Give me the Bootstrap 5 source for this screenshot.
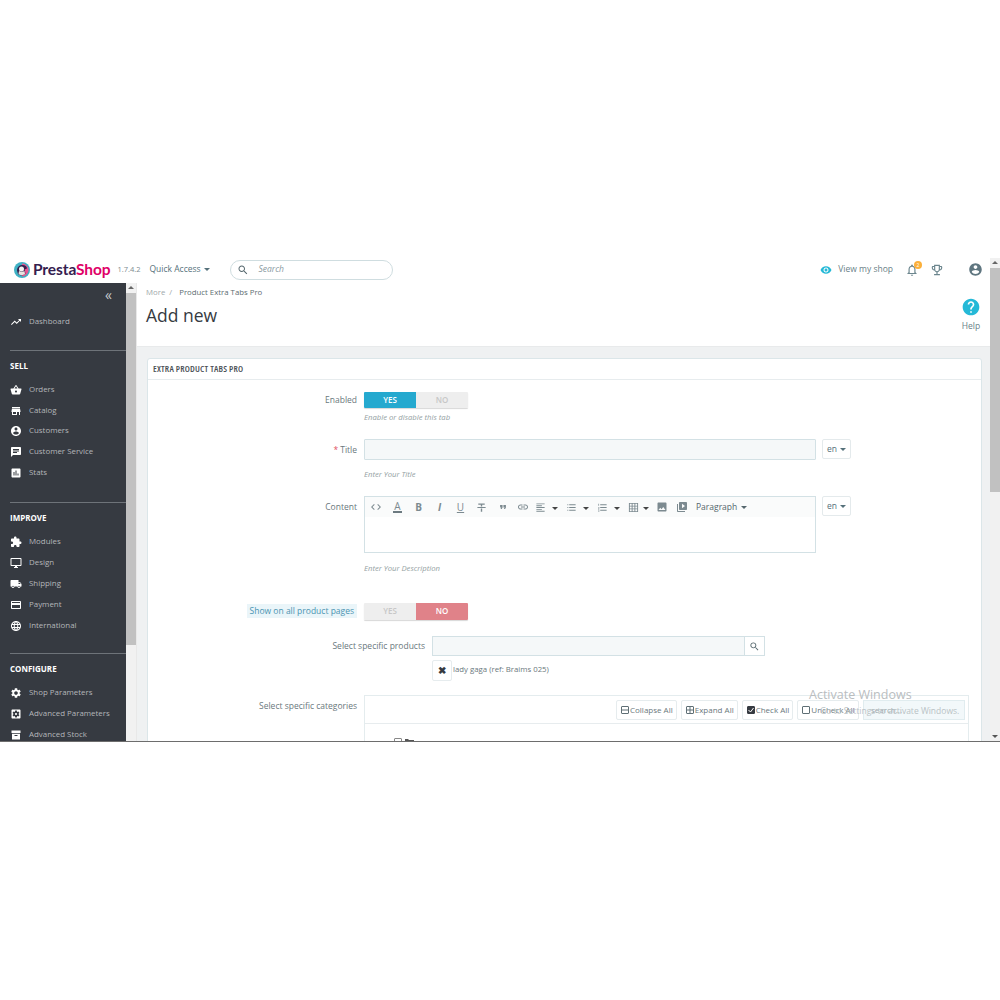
<!DOCTYPE html>
<html lang="en">
<head>
<meta charset="utf-8">
<title>Add new</title>
<link href="https://cdn.jsdelivr.net/npm/bootstrap@5.3.0/dist/css/bootstrap.min.css" rel="stylesheet">
<style>
html,body{height:1000px;overflow:hidden;background:#fff;font-family:"Open Sans",sans-serif;font-size:8.5px;color:#6c868e}
.ico{fill:currentColor;flex:none;display:block}
.screen{margin-top:258px;height:484px;border-bottom:1px solid #6d6d6d;overflow:hidden;position:relative}
.content-col{width:990px;min-width:0}
.scroll-r{width:10px;background:#f1f1f1;flex:none}
.arrow-u{width:0;height:0;border:3px solid transparent;border-top:0;border-bottom:3px solid #666;margin:3px auto 4px}
.arrow-d{width:0;height:0;border:3px solid transparent;border-bottom:0;border-top:3px solid #555;margin:auto auto 3px}
.thumb-r{height:224px;background:#c1c1c1}
.topbar{height:25px;background:#fff;padding-bottom:2px}
.logo-mark{width:16px;height:16px;margin-left:14px;flex:none}
.logo-word{font-family:Lato,sans-serif;font-weight:700;font-size:15.5px;line-height:1;margin-left:3px;letter-spacing:-.1px;color:#34204f}
.logo-word b{color:#df0067;font-weight:700}
.ver{font-size:7.5px;color:#7d8a8f;margin-left:7px;width:32px}
.quick{font-size:8.5px;color:#55707a;width:80px}
.caret-d{display:inline-block;width:0;height:0;border:3px solid transparent;border-bottom:0;border-top:3px solid currentColor;margin-left:3px;vertical-align:1px}
.searchbox{width:163px;height:20px;border:1px solid #cfdde0;border-radius:10px;color:#55676d;padding-left:6px}
.searchbox i{font-size:8.5px;color:#8a9a9f;margin-left:10px}
.view-link{font-size:8.5px;color:#6a7f87;margin-left:auto}
.eye{color:#25b9d7;margin-right:6px}
.bell-w{margin-left:12px;position:relative;color:#6c868e}
.bell-badge{position:absolute;top:-2px;right:-3px;width:8px;height:8px;border-radius:50%;background:#fbb03b;color:#fff;font-size:5px;line-height:8px;text-align:center}
.cup{color:#6c868e;margin-left:11px}
.userc{color:#5f7680;margin-left:24px;margin-right:7px}
.side{width:126px;background:#363a41;flex:none;height:459px;overflow:hidden;color:#bebebe}
.side-top{height:29px;padding:5px 14px 0 0;color:#c5c9cc;font-size:14px;line-height:13px;text-align:right}
.side-row{height:20.8px;padding-left:10px;gap:7px;color:#b4b6b9;font-size:7.9px;white-space:nowrap}
.side-row .ico{color:#fff}
.side-rule{height:1px;background:#6e7379;margin-left:10px}
.side-title{height:28.6px;padding:1px 0 0 10px;color:#fff;font-weight:700;font-size:8px;display:flex;align-items:center}
.scroll-l{width:11px;background:#f1f1f1;flex:none;border-right:1px solid #e8e8e8}
.thumb-l{height:352px;background:#c1c1c1}
.main-pane{background:#eff1f2;height:459px;min-width:0;overflow:hidden}
.page-head{height:64px;background:#fff;padding:4px 1px 0 9px;border-bottom:1px solid #e8eaeb}
.crumb{font-size:7.8px;line-height:11px;color:#5d6c71}
.crumb span{color:#a0a8ab;margin-right:7px}
.page-title{font-size:17.5px;line-height:24px;margin:5px 0 0;font-weight:400;color:#363a41}
.help-b{width:36px;padding-top:10px;font-size:8.5px;color:#6a7f87}
.help-b .ico{color:#25b9d7;margin:0 auto 3px}
.panelx{margin:11px 8px 0 10px;background:#fff;border:1px solid #dbe6e9;border-radius:3px;height:420px}
.panelx-head{height:21px;border-bottom:1px solid #e7ecee;padding-left:5px;font-family:"Open Sans",sans-serif;font-weight:600;font-size:9px;color:#4a4f55;line-height:20px;font-stretch:condensed;letter-spacing:.2px}
.frow{display:flex;align-items:flex-start}
.lab{width:216px;text-align:right;padding-right:7px;font-size:8.5px;line-height:16px;color:#6a787d;flex:none}
.lab em{color:#e0505f;font-style:normal;margin-right:2px}
.sw{width:104px;height:17px;font-size:8px;font-weight:600;flex:none;box-shadow:0 1px 1px #d8d8d8;border-radius:1px;overflow:hidden}
.sw span{width:52px;line-height:16px;text-align:center;color:#c7c7c7;background:#eee}
.sw .on-y{background:#25a9cf;color:#fff}
.sw .on-n{background:#e08289;color:#fff}
.hint{font-style:italic;font-size:7.7px;line-height:12px;color:#949fa3}
.finput{background:#f5f8f9;border:1px solid #d3e1e5;height:21px;border-radius:1px}
.langbtn{width:29px;height:20px;border:1px solid #e4eaec;border-radius:2px;margin-left:6px;font-size:8.5px;color:#55707a;text-align:center;line-height:18px;flex:none}
.editor{width:452px;height:57px;border:1px solid #d3e1e5;flex:none}
.ed-tools{height:20px;background:#fafbfb;padding-left:4px;color:#7c8a90;font-size:10px;line-height:1}
.ed-tools .tool{width:21px;flex:none;display:flex;justify-content:center;align-items:center}
.ed-tools .tw{width:14px;flex:none;display:flex;justify-content:center}
.ed-tools .ca{width:17px;flex:none;color:#444;padding-left:5px}
.ed-a{font-size:10px;border-bottom:2px solid #6c7a80;line-height:10px;padding:0 1px}
.show-lab{background:#eaf5f9;color:#4a94b2;padding:0 3px;display:inline-block;line-height:14px;font-size:8.5px}
.group-in{width:313px;height:20px;background:#f5f8f9;border:1px solid #d3e1e5;flex:none}
.group-btn{width:20px;height:20px;border:1px solid #d3e1e5;border-left:0;color:#55676d;flex:none}
.xbtn{width:20px;height:21px;border:1px solid #e6ecee;border-radius:2px;color:#363a41;font-size:10px;font-weight:700;line-height:19px;text-align:center;flex:none}
.tag-text{font-size:7.8px;color:#6a787d;margin-left:1px;line-height:18px}
.cat-box{width:605px;height:70px;border:1px solid #e4ecee;flex:none}
.cat-bar{height:28px;border-bottom:1px solid #e7ecee;padding-left:251px;padding-top:1px;gap:4px}
.cat-btn{height:20px;border:1px solid #e6ecee;border-radius:2px;font-size:8px;color:#6a787d;padding:0 3px 0 4px;gap:1px;white-space:nowrap;background:#fff;flex:none}
.box-i{width:8px;height:8px;border:1px solid #5f6f75;border-radius:1px;position:relative;flex:none}
.cat-tree{padding:14px 0 0 29px;gap:3px;color:#55676d}
.tree-c{width:8px;height:8px;border:1px solid #888;border-radius:1px;background:#fff}
.wm-title{position:absolute;left:809px;top:429px;font-size:12.5px;line-height:16px;color:#b9bdbf}
.wm-sub{position:absolute;left:820px;top:447px;font-size:8.5px;line-height:11px;color:#b9c2c5;white-space:nowrap}
.cat-search{position:absolute;left:863px;top:442px;width:102px;height:20px;background:rgba(240,247,249,.85);border:1px solid #e0ecef;color:#9aa6aa;font-size:8px;line-height:18px;padding-left:7px}
</style>
</head>
<body>
<svg width="0" height="0" class="d-none" aria-hidden="true">
<symbol id="i-trend" viewBox="0 0 24 24"><path d="M16 6l2.29 2.29-4.88 4.88-4-4L2 16.59 3.41 18l6-6 4 4 6.3-6.29L22 12V6z"/></symbol>
<symbol id="i-basket" viewBox="0 0 24 24"><path d="M17.21 9l-4.38-6.56c-.19-.28-.51-.42-.83-.42-.32 0-.64.14-.83.43L6.79 9H2c-.55 0-1 .45-1 1 0 .09.01.18.04.27l2.54 9.27c.23.84 1 1.46 1.92 1.46h13c.92 0 1.69-.62 1.93-1.46l2.54-9.27L23 10c0-.55-.45-1-1-1h-4.79zM9 9l3-4.4L15 9H9zm3 8c-1.1 0-2-.9-2-2s.9-2 2-2 2 .9 2 2-.9 2-2 2z"/></symbol>
<symbol id="i-store" viewBox="0 0 24 24"><path d="M20 4H4v2h16V4zm1 10v-2l-1-5H4l-1 5v2h1v6h10v-6h4v6h2v-6h1zm-9 4H6v-4h6v4z"/></symbol>
<symbol id="i-user" viewBox="0 0 24 24"><path d="M12 2C6.48 2 2 6.48 2 12s4.48 10 10 10 10-4.48 10-10S17.52 2 12 2zm0 3c1.66 0 3 1.34 3 3s-1.34 3-3 3-3-1.34-3-3 1.34-3 3-3zm0 14.2c-2.5 0-4.71-1.28-6-3.22.03-1.99 4-3.08 6-3.08 1.99 0 5.97 1.09 6 3.08-1.29 1.94-3.5 3.22-6 3.22z"/></symbol>
<symbol id="i-chat" viewBox="0 0 24 24"><path d="M20 2H4c-1.1 0-1.99.9-1.99 2L2 22l4-4h14c1.1 0 2-.9 2-2V4c0-1.1-.9-2-2-2zM6 9h12v2H6V9zm8 5H6v-2h8v2zm4-6H6V6h12v2z"/></symbol>
<symbol id="i-stats" viewBox="0 0 24 24"><path d="M19 3H5c-1.1 0-2 .9-2 2v14c0 1.1.9 2 2 2h14c1.1 0 2-.9 2-2V5c0-1.1-.9-2-2-2zM9 17H7v-7h2v7zm4 0h-2V7h2v10zm4 0h-2v-4h2v4z"/></symbol>
<symbol id="i-ext" viewBox="0 0 24 24"><path d="M20.5 11H19V7c0-1.1-.9-2-2-2h-4V3.5C13 2.12 11.88 1 10.5 1S8 2.12 8 3.5V5H4c-1.1 0-1.99.9-1.99 2v3.8H3.5c1.49 0 2.7 1.21 2.7 2.7s-1.21 2.7-2.7 2.7H2V20c0 1.1.9 2 2 2h3.8v-1.5c0-1.49 1.21-2.7 2.7-2.7 1.49 0 2.7 1.21 2.7 2.7V22H17c1.1 0 2-.9 2-2v-4h1.5c1.38 0 2.5-1.12 2.5-2.5S21.88 11 20.5 11z"/></symbol>
<symbol id="i-desk" viewBox="0 0 24 24"><path d="M21 2H3c-1.1 0-2 .9-2 2v12c0 1.1.9 2 2 2h7v2H8v2h8v-2h-2v-2h7c1.1 0 2-.9 2-2V4c0-1.1-.9-2-2-2zm0 14H3V4h18v12z"/></symbol>
<symbol id="i-ship" viewBox="0 0 24 24"><path d="M20 8h-3V4H3c-1.1 0-2 .9-2 2v11h2c0 1.66 1.34 3 3 3s3-1.34 3-3h6c0 1.66 1.34 3 3 3s3-1.34 3-3h2v-5l-3-4zM6 18.5c-.83 0-1.5-.67-1.5-1.5s.67-1.5 1.5-1.5 1.5.67 1.5 1.5-.67 1.5-1.5 1.5zm13.5-9l1.96 2.5H17V9.5h2.5zm-1.5 9c-.83 0-1.5-.67-1.5-1.5s.67-1.5 1.5-1.5 1.5.67 1.5 1.5-.67 1.5-1.5 1.5z"/></symbol>
<symbol id="i-pay" viewBox="0 0 24 24"><path d="M20 4H4c-1.11 0-1.99.89-1.99 2L2 18c0 1.11.89 2 2 2h16c1.11 0 2-.89 2-2V6c0-1.11-.89-2-2-2zm0 14H4v-6h16v6zm0-10H4V6h16v2z"/></symbol>
<symbol id="i-lang" viewBox="0 0 24 24"><path d="M11.99 2C6.47 2 2 6.48 2 12s4.47 10 9.99 10C17.52 22 22 17.52 22 12S17.52 2 11.99 2zm6.93 6h-2.95c-.32-1.25-.78-2.45-1.38-3.56 1.84.63 3.37 1.91 4.33 3.56zM12 4.04c.83 1.2 1.48 2.53 1.91 3.96h-3.82c.43-1.43 1.08-2.76 1.91-3.96zM4.26 14C4.1 13.36 4 12.69 4 12s.1-1.36.26-2h3.38c-.08.66-.14 1.32-.14 2 0 .68.06 1.34.14 2H4.26zm.82 2h2.95c.32 1.25.78 2.45 1.38 3.56-1.84-.63-3.37-1.9-4.33-3.56zm2.95-8H5.08c.96-1.66 2.49-2.93 4.33-3.56C8.81 5.55 8.35 6.75 8.03 8zM12 19.96c-.83-1.2-1.48-2.53-1.91-3.96h3.82c-.43 1.43-1.08 2.76-1.91 3.96zM14.34 14H9.66c-.09-.66-.16-1.32-.16-2 0-.68.07-1.35.16-2h4.68c.09.65.16 1.32.16 2 0 .68-.07 1.34-.16 2zm.25 5.56c.6-1.11 1.06-2.31 1.38-3.56h2.95c-.96 1.65-2.49 2.93-4.33 3.56zM16.36 14c.08-.66.14-1.32.14-2 0-.68-.06-1.34-.14-2h3.38c.16.64.26 1.31.26 2s-.1 1.36-.26 2h-3.38z"/></symbol>
<symbol id="i-gear" viewBox="0 0 24 24"><path d="M19.14 12.94c.04-.3.06-.61.06-.94 0-.32-.02-.64-.07-.94l2.03-1.58c.18-.14.23-.41.12-.61l-1.92-3.32c-.12-.22-.37-.29-.59-.22l-2.39.96c-.5-.38-1.03-.7-1.62-.94l-.36-2.54c-.04-.24-.24-.41-.48-.41h-3.84c-.24 0-.43.17-.47.41l-.36 2.54c-.59.24-1.13.57-1.62.94l-2.39-.96c-.22-.08-.47 0-.59.22L2.74 8.87c-.12.21-.08.47.12.61l2.03 1.58c-.05.3-.09.63-.09.94s.02.64.07.94l-2.03 1.58c-.18.14-.23.41-.12.61l1.92 3.32c.12.22.37.29.59.22l2.39-.96c.5.38 1.03.7 1.62.94l.36 2.54c.05.24.24.41.48.41h3.84c.24 0 .44-.17.47-.41l.36-2.54c.59-.24 1.13-.56 1.62-.94l2.39.96c.22.08.47 0 .59-.22l1.92-3.32c.12-.22.07-.47-.12-.61l-2.01-1.58zM12 15.6c-1.98 0-3.6-1.62-3.6-3.6s1.62-3.6 3.6-3.6 3.6 1.62 3.6 3.6-1.62 3.6-3.6 3.6z"/></symbol>
<symbol id="i-gearbox" viewBox="0 0 24 24"><path d="M12 10c-1.1 0-2 .9-2 2s.9 2 2 2 2-.9 2-2-.9-2-2-2zm7-7H5c-1.11 0-2 .9-2 2v14c0 1.1.89 2 2 2h14c1.11 0 2-.9 2-2V5c0-1.1-.89-2-2-2zm-1.75 9c0 .23-.02.46-.05.68l1.48 1.16c.13.11.17.3.08.45l-1.4 2.42c-.09.15-.27.21-.43.15l-1.74-.7c-.36.28-.76.51-1.18.69l-.26 1.85c-.03.17-.18.3-.35.3h-2.8c-.17 0-.32-.13-.35-.29l-.26-1.85c-.43-.18-.82-.41-1.18-.69l-1.74.7c-.16.06-.34 0-.43-.15l-1.4-2.42c-.09-.15-.05-.34.08-.45l1.48-1.16c-.03-.23-.05-.46-.05-.69 0-.23.02-.46.05-.68l-1.48-1.16c-.13-.11-.17-.3-.08-.45l1.4-2.42c.09-.15.27-.21.43-.15l1.74.7c.36-.28.76-.51 1.18-.69l.26-1.85c.03-.17.18-.3.35-.3h2.8c.17 0 .32.13.35.29l.26 1.85c.43.18.82.41 1.18.69l1.74-.7c.16-.06.34 0 .43.15l1.4 2.42c.09.15.05.34-.08.45l-1.48 1.16c.03.23.05.46.05.69z"/></symbol>
<symbol id="i-arch" viewBox="0 0 24 24"><path fill-rule="evenodd" d="M3 3h18v5H3zM4 9.5h16V21H4zM9 12v2h6v-2z"/></symbol>
<symbol id="i-search" viewBox="0 0 24 24"><path d="M15.5 14h-.79l-.28-.27C15.41 12.59 16 11.11 16 9.5 16 5.91 13.09 3 9.5 3S3 5.91 3 9.5 5.91 16 9.5 16c1.61 0 3.09-.59 4.23-1.57l.27.28v.79l5 4.99L20.49 19l-4.99-5zm-6 0C7.01 14 5 11.99 5 9.5S7.01 5 9.5 5 14 7.01 14 9.5 11.99 14 9.5 14z"/></symbol>
<symbol id="i-eye" viewBox="0 0 24 24"><path d="M12 4.5C7 4.5 2.73 7.61 1 12c1.73 4.39 6 7.5 11 7.5s9.27-3.11 11-7.5c-1.73-4.39-6-7.5-11-7.5zM12 17c-2.76 0-5-2.24-5-5s2.24-5 5-5 5 2.24 5 5-2.24 5-5 5zm0-8c-1.66 0-3 1.34-3 3s1.34 3 3 3 3-1.34 3-3-1.34-3-3-3z"/></symbol>
<symbol id="i-bell" viewBox="0 0 24 24"><path d="M12 22c1.1 0 2-.9 2-2h-4c0 1.1.9 2 2 2zm6-6v-5c0-3.07-1.63-5.64-4.5-6.32V4c0-.83-.67-1.5-1.5-1.5s-1.5.67-1.5 1.5v.68C7.64 5.36 6 7.92 6 11v5l-2 2v1h16v-1l-2-2zm-2 1H8v-6c0-2.48 1.51-4.5 4-4.5s4 2.02 4 4.5v6z"/></symbol>
<symbol id="i-cup" viewBox="0 0 24 24"><path fill-rule="evenodd" d="M19 5h-2V3H7v2H5c-1.1 0-2 .9-2 2v1c0 2.55 1.92 4.63 4.39 4.94.63 1.5 1.98 2.63 3.61 2.96V19H7v2h10v-2h-4v-3.1c1.63-.33 2.98-1.46 3.61-2.96C19.08 12.63 21 10.55 21 8V7c0-1.1-.9-2-2-2zM5 8V7h2v3.82C5.84 10.4 5 9.3 5 8zm14 0c0 1.3-.84 2.4-2 2.82V7h2v1zM9 5v6c0 1.65 1.35 3 3 3s3-1.35 3-3V5z"/></symbol>
<symbol id="i-help" viewBox="0 0 24 24"><path d="M12 2C6.48 2 2 6.48 2 12s4.48 10 10 10 10-4.48 10-10S17.52 2 12 2zm1 17h-2v-2h2v2zm2.07-7.75l-.9.92C13.45 12.9 13 13.5 13 15h-2v-.5c0-1.1.45-2.1 1.17-2.83l1.24-1.26c.37-.36.59-.86.59-1.41 0-1.1-.9-2-2-2s-2 .9-2 2H8c0-2.21 1.79-4 4-4s4 1.79 4 4c0 .88-.36 1.68-.93 2.25z"/></symbol>
<symbol id="i-code" viewBox="0 0 24 24"><path d="M9.4 16.6L4.8 12l4.6-4.6L8 6l-6 6 6 6 1.4-1.4zm5.2 0l4.6-4.6-4.6-4.6L16 6l6 6-6 6-1.4-1.4z"/></symbol>
<symbol id="i-strike" viewBox="0 0 24 24"><path d="M3 11h18v2H3zM5 3h14v3h-5.500v4h-3V6H5zM10.500 14h3v7h-3z"/></symbol>
<symbol id="i-quote" viewBox="0 0 24 24"><path d="M6 17h3l2-4V7H5v6h3zm8 0h3l2-4V7h-6v6h3z"/></symbol>
<symbol id="i-link" viewBox="0 0 24 24"><path d="M3.9 12c0-1.71 1.39-3.1 3.1-3.1h4V7H7c-2.76 0-5 2.24-5 5s2.24 5 5 5h4v-1.9H7c-1.71 0-3.1-1.39-3.1-3.1zM8 13h8v-2H8v2zm9-6h-4v1.9h4c1.71 0 3.1 1.39 3.1 3.1s-1.39 3.1-3.1 3.1h-4V17h4c2.76 0 5-2.24 5-5s-2.24-5-5-5z"/></symbol>
<symbol id="i-left" viewBox="0 0 24 24"><path d="M15 15H3v2h12v-2zm0-8H3v2h12V7zM3 13h18v-2H3v2zm0 8h18v-2H3v2zM3 3v2h18V3H3z"/></symbol>
<symbol id="i-bul" viewBox="0 0 24 24"><path d="M3 5h2v2H3zM3 11h2v2H3zM3 17h2v2H3zM7 5h14v2H7zM7 11h14v2H7zM7 17h14v2H7z"/></symbol>
<symbol id="i-num" viewBox="0 0 24 24"><path d="M7 5h14v2H7zM7 11h14v2H7zM7 17h14v2H7zM3 4h1.500v4H3zM2.500 11h2.500v3.500H3V16h2v1H2.500v-3.500h1.500V12H2.500zM2.500 18h2.500v3H2.500v-1h1.500v-.2H3v-.8h1v-.2H2.500z"/></symbol>
<symbol id="i-table" viewBox="0 0 24 24"><path fill-rule="evenodd" d="M2 2h20v20H2zM4 4v4h4V4zm6 0v4h4V4zm6 0v4h4V4zM4 10v4h4v-4zm6 0v4h4v-4zm6 0v4h4v-4zM4 16v4h4v-4zm6 0v4h4v-4zm6 0v4h4v-4z"/></symbol>
<symbol id="i-img" viewBox="0 0 24 24"><path d="M21 19V5c0-1.100-.9-2-2-2H5c-1.100 0-2 .9-2 2v14c0 1.100.9 2 2 2h14c1.100 0 2-.9 2-2zM8.500 13.500l2.500 3.010L14.500 12l4.500 6H5l3.500-4.500z"/></symbol>
<symbol id="i-vid" viewBox="0 0 24 24"><path d="M4 6H2v14c0 1.100.9 2 2 2h14v-2H4V6zm16-4H8c-1.100 0-2 .9-2 2v12c0 1.100.9 2 2 2h12c1.100 0 2-.9 2-2V4c0-1.100-.9-2-2-2zm-8 12.500v-9l6 4.500-6 4.500z"/></symbol>
</svg>

<div class="screen d-flex">
  <div class="content-col">
    <div class="topbar d-flex align-items-center">
      <svg class="logo-mark" viewBox="0 0 32 32" aria-hidden="true">
        <circle cx="16" cy="16" r="16" fill="#3fb1c4"/>
        <path d="M16 3a13 13 0 0 1 13 13c0 7-6 13-13 13z" fill="#e8548f"/>
        <path d="M6 17c0-7 5-11 11-11 5 0 9 3 9 7l-5 2 2 8c-4 5-12 5-15 1z" fill="#34204f"/>
        <circle cx="15" cy="14" r="5" fill="#f4f1ef"/>
        <path d="M10 18c3 2 8 2 11 0l1 6c-3 3-10 3-13 0z" fill="#e9e3df"/>
      </svg>
      <span class="logo-word">Presta<b>Shop</b></span>
      <span class="ver">1.7.4.2</span>
      <span class="quick">Quick Access<i class="caret-d"></i></span>
      <div class="searchbox d-flex align-items-center">
        <svg class="ico" width="12" height="12"><use href="#i-search"/></svg>
        <i>Search</i>
      </div>
      <span class="view-link d-flex align-items-center"><svg class="ico eye" width="12" height="12"><use href="#i-eye"/></svg>View my shop</span>
      <span class="bell-w"><svg class="ico" width="14" height="14"><use href="#i-bell"/></svg><span class="bell-badge">2</span></span>
      <svg class="ico cup" width="14" height="14"><use href="#i-cup"/></svg>
      <svg class="ico userc" width="15" height="15"><use href="#i-user"/></svg>
    </div>
    <div class="d-flex">
      <nav class="side">
        <div class="side-top">&#171;</div>
        <div class="side-row d-flex align-items-center"><svg class="ico" width="12" height="12"><use href="#i-trend"/></svg>Dashboard</div>
        <div class="side-rule" style="margin-top:17px"></div>
        <div class="side-title">SELL</div>
        <div class="side-row d-flex align-items-center"><svg class="ico" width="12" height="12"><use href="#i-basket"/></svg>Orders</div>
        <div class="side-row d-flex align-items-center"><svg class="ico" width="12" height="12"><use href="#i-store"/></svg>Catalog</div>
        <div class="side-row d-flex align-items-center"><svg class="ico" width="12" height="12"><use href="#i-user"/></svg>Customers</div>
        <div class="side-row d-flex align-items-center"><svg class="ico" width="12" height="12"><use href="#i-chat"/></svg>Customer Service</div>
        <div class="side-row d-flex align-items-center"><svg class="ico" width="12" height="12"><use href="#i-stats"/></svg>Stats</div>
        <div class="side-rule" style="margin-top:19px"></div>
        <div class="side-title">IMPROVE</div>
        <div class="side-row d-flex align-items-center"><svg class="ico" width="12" height="12"><use href="#i-ext"/></svg>Modules</div>
        <div class="side-row d-flex align-items-center"><svg class="ico" width="12" height="12"><use href="#i-desk"/></svg>Design</div>
        <div class="side-row d-flex align-items-center"><svg class="ico" width="12" height="12"><use href="#i-ship"/></svg>Shipping</div>
        <div class="side-row d-flex align-items-center"><svg class="ico" width="12" height="12"><use href="#i-pay"/></svg>Payment</div>
        <div class="side-row d-flex align-items-center"><svg class="ico" width="12" height="12"><use href="#i-lang"/></svg>International</div>
        <div class="side-rule" style="margin-top:17px"></div>
        <div class="side-title">CONFIGURE</div>
        <div class="side-row d-flex align-items-center"><svg class="ico" width="12" height="12"><use href="#i-gear"/></svg>Shop Parameters</div>
        <div class="side-row d-flex align-items-center"><svg class="ico" width="12" height="12"><use href="#i-gearbox"/></svg>Advanced Parameters</div>
        <div class="side-row d-flex align-items-center"><svg class="ico" width="12" height="12"><use href="#i-arch"/></svg>Advanced Stock</div>
      </nav>
      <div class="scroll-l">
        <div class="arrow-u"></div>
        <div class="thumb-l"></div>
      </div>
      <main class="main-pane flex-grow-1">
        <div class="page-head d-flex justify-content-between">
          <div>
            <div class="crumb"><span>More &nbsp;/</span>Product Extra Tabs Pro</div>
            <h1 class="page-title">Add new</h1>
          </div>
          <div class="help-b text-center"><svg class="ico" width="20" height="20"><use href="#i-help"/></svg>Help</div>
        </div>
        <div class="panelx">
          <div class="panelx-head">EXTRA PRODUCT TABS PRO</div>
          <div class="frow" style="margin-top:12px">
            <div class="lab">Enabled</div>
            <div class="sw d-flex" style="height:16px"><span class="on-y">YES</span><span>NO</span></div>
          </div>
          <div class="frow" style="margin-top:3px"><div class="lab"></div><div class="hint">Enable or disable this tab</div></div>
          <div class="frow" style="margin-top:16px">
            <div class="lab" style="line-height:21px"><em>*</em>Title</div>
            <div class="finput flex-none" style="width:452px"></div>
            <div class="langbtn">en<i class="caret-d"></i></div>
          </div>
          <div class="frow" style="margin-top:8px"><div class="lab"></div><div class="hint">Enter Your Title</div></div>
          <div class="frow" style="margin-top:16px">
            <div class="lab" style="line-height:21px">Content</div>
            <div class="editor">
              <div class="ed-tools d-flex align-items-center">
                <span class="tw" style="margin-right:4px"><svg class="ico" width="12" height="12"><use href="#i-code"/></svg></span>
                <span class="tool"><span class="ed-a">A</span></span>
                <span class="tool fw-bold">B</span>
                <span class="tool fst-italic fw-bold">I</span>
                <span class="tool text-decoration-underline">U</span>
                <span class="tool"><svg class="ico" width="11" height="11"><use href="#i-strike"/></svg></span>
                <span class="tool"><svg class="ico" width="10" height="10"><use href="#i-quote"/></svg></span>
                <span class="tool" style="width:20px"><svg class="ico" width="12" height="12"><use href="#i-link"/></svg></span>
                <span class="tw"><svg class="ico" width="11" height="11"><use href="#i-left"/></svg></span>
                <span class="ca"><i class="caret-d m-0"></i></span>
                <span class="tw"><svg class="ico" width="11" height="11"><use href="#i-bul"/></svg></span>
                <span class="ca"><i class="caret-d m-0"></i></span>
                <span class="tw"><svg class="ico" width="11" height="11"><use href="#i-num"/></svg></span>
                <span class="ca"><i class="caret-d m-0"></i></span>
                <span class="tw"><svg class="ico" width="11" height="11"><use href="#i-table"/></svg></span>
                <span class="ca" style="width:15px;padding-left:3px"><i class="caret-d m-0"></i></span>
                <span class="tw" style="margin-right:6px"><svg class="ico" width="12" height="12"><use href="#i-img"/></svg></span>
                <span class="tw" style="margin-right:7px"><svg class="ico" width="12" height="12"><use href="#i-vid"/></svg></span>
                <span style="font-size:8.5px;color:#55676d">Paragraph<i class="caret-d" style="margin-left:4px"></i></span>
              </div>
            </div>
            <div class="langbtn">en<i class="caret-d"></i></div>
          </div>
          <div class="frow" style="margin-top:9px"><div class="lab"></div><div class="hint">Enter Your Description</div></div>
          <div class="frow" style="margin-top:29px">
            <div class="lab"><span class="show-lab">Show on all product pages</span></div>
            <div class="sw d-flex"><span>YES</span><span class="on-n">NO</span></div>
          </div>
          <div class="frow" style="margin-top:16px">
            <div class="lab" style="width:284px;line-height:20px">Select specific products</div>
            <div class="group-in"></div>
            <div class="group-btn d-flex align-items-center justify-content-center"><svg class="ico" width="11" height="11"><use href="#i-search"/></svg></div>
          </div>
          <div class="frow" style="margin-top:4px">
            <div class="lab" style="width:284px"></div>
            <div class="xbtn">&#10006;</div>
            <div class="tag-text">lady gaga (ref: Braims 025)</div>
          </div>
          <div class="frow" style="margin-top:14px">
            <div class="lab" style="line-height:22px">Select specific categories</div>
            <div class="cat-box">
              <div class="cat-bar d-flex align-items-center">
                <div class="cat-btn d-flex align-items-center"><span class="box-i d-flex align-items-center justify-content-center"><svg width="6" height="6" viewBox="0 0 6 6" aria-hidden="true"><path d="M0 3h6" stroke="#5f6f75"/></svg></span>Collapse All</div>
                <div class="cat-btn d-flex align-items-center"><span class="box-i d-flex align-items-center justify-content-center"><svg width="6" height="6" viewBox="0 0 6 6" aria-hidden="true"><path d="M0 3h6M3 0v6" stroke="#5f6f75"/></svg></span>Expand All</div>
                <div class="cat-btn d-flex align-items-center"><span class="box-i d-flex align-items-center justify-content-center" style="background:#363a41;border-color:#363a41"><svg width="6" height="6" viewBox="0 0 6 6" aria-hidden="true"><path d="M.5 3l2 2L5.500 1" stroke="#fff" fill="none"/></svg></span>Check All</div>
                <div class="cat-btn d-flex align-items-center"><span class="box-i"></span>Uncheck All</div>
              </div>
              <div class="cat-tree d-flex align-items-center"><span class="tree-c"></span><svg width="9" height="8" viewBox="0 0 9 8" aria-hidden="true"><path d="M0 1h3l1 1h5v6H0z" fill="#555"/></svg></div>
            </div>
          </div>
        </div>
      </main>
    </div>
  </div>
  <div class="scroll-r d-flex flex-column">
    <div class="arrow-u"></div>
    <div class="thumb-r"></div>
    <div class="arrow-d"></div>
  </div>
  <div class="cat-search">search...</div>
  <div class="wm-title">Activate Windows</div>
  <div class="wm-sub">Go to Settings to activate Windows.</div>
</div>
</body>
</html>
